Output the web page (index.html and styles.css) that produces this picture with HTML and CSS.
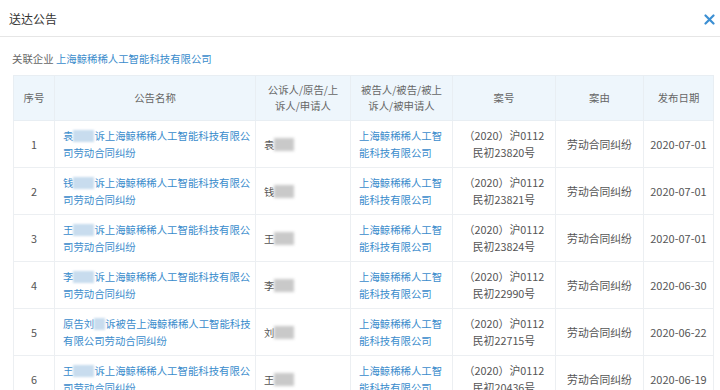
FILE: index.html
```html
<!DOCTYPE html>
<html lang="zh-CN">
<head>
<meta charset="utf-8">
<title>送达公告</title>
<link rel="stylesheet" href="styles.css">
</head>
<body>
<div class="dialog">
  <div class="dlg-head">
    <span class="dlg-title">送达公告</span>
    <svg class="close" width="11" height="11" viewBox="0 0 11 11"><path d="M1.5 1.5 L9.5 9.5 M9.5 1.5 L1.5 9.5" stroke="#3b8fd3" stroke-width="2.2" stroke-linecap="round"/></svg>
  </div>
  <div class="dlg-body">
    <div class="rel">关联企业 <a class="link">上海鲸稀稀人工智能科技有限公司</a></div>
    <table class="grid">
      <colgroup>
        <col class="c1"><col class="c2"><col class="c3"><col class="c4"><col class="c5"><col class="c6"><col class="c7">
      </colgroup>
      <thead>
        <tr>
          <th>序号</th>
          <th>公告名称</th>
          <th>公诉人/原告/上诉人/申请人</th>
          <th>被告人/被告/被上诉人/被申请人</th>
          <th>案号</th>
          <th>案由</th>
          <th>发布日期</th>
        </tr>
      </thead>
      <tbody>
        <tr>
          <td class="ctr">1</td>
          <td class="lft"><a class="link">袁<span class="blur b2"></span>诉上海鲸稀稀人工智能科技有限公司劳动合同纠纷</a></td>
          <td class="lft">袁<span class="gblur"></span></td>
          <td class="lft"><a class="link">上海鲸稀稀人工智能科技有限公司</a></td>
          <td class="ctr">（2020）沪0112民初23820号</td>
          <td class="ctr">劳动合同纠纷</td>
          <td class="ctr date">2020-07-01</td>
        </tr>
        <tr>
          <td class="ctr">2</td>
          <td class="lft"><a class="link">钱<span class="blur b2"></span>诉上海鲸稀稀人工智能科技有限公司劳动合同纠纷</a></td>
          <td class="lft">钱<span class="gblur"></span></td>
          <td class="lft"><a class="link">上海鲸稀稀人工智能科技有限公司</a></td>
          <td class="ctr">（2020）沪0112民初23821号</td>
          <td class="ctr">劳动合同纠纷</td>
          <td class="ctr date">2020-07-01</td>
        </tr>
        <tr>
          <td class="ctr">3</td>
          <td class="lft"><a class="link">王<span class="blur b2"></span>诉上海鲸稀稀人工智能科技有限公司劳动合同纠纷</a></td>
          <td class="lft">王<span class="gblur"></span></td>
          <td class="lft"><a class="link">上海鲸稀稀人工智能科技有限公司</a></td>
          <td class="ctr">（2020）沪0112民初23824号</td>
          <td class="ctr">劳动合同纠纷</td>
          <td class="ctr date">2020-07-01</td>
        </tr>
        <tr>
          <td class="ctr">4</td>
          <td class="lft"><a class="link">李<span class="blur b2"></span>诉上海鲸稀稀人工智能科技有限公司劳动合同纠纷</a></td>
          <td class="lft">李<span class="gblur"></span></td>
          <td class="lft"><a class="link">上海鲸稀稀人工智能科技有限公司</a></td>
          <td class="ctr">（2020）沪0112民初22990号</td>
          <td class="ctr">劳动合同纠纷</td>
          <td class="ctr date">2020-06-30</td>
        </tr>
        <tr>
          <td class="ctr">5</td>
          <td class="lft"><a class="link">原告刘<span class="blur b1"></span>诉被告上海鲸稀稀人工智能科技有限公司劳动合同纠纷</a></td>
          <td class="lft">刘<span class="gblur"></span></td>
          <td class="lft"><a class="link">上海鲸稀稀人工智能科技有限公司</a></td>
          <td class="ctr">（2020）沪0112民初22715号</td>
          <td class="ctr">劳动合同纠纷</td>
          <td class="ctr date">2020-06-22</td>
        </tr>
        <tr>
          <td class="ctr">6</td>
          <td class="lft"><a class="link">王<span class="blur b2"></span>诉上海鲸稀稀人工智能科技有限公司劳动合同纠纷</a></td>
          <td class="lft">王<span class="gblur"></span></td>
          <td class="lft"><a class="link">上海鲸稀稀人工智能科技有限公司</a></td>
          <td class="ctr">（2020）沪0112民初20436号</td>
          <td class="ctr">劳动合同纠纷</td>
          <td class="ctr date">2020-06-19</td>
        </tr>
      </tbody>
    </table>
  </div>
</div>
</body>
</html>
```
FILE: styles.css
```css
html, body {
  margin: 0;
  padding: 0;
  background: #fff;
}
body {
  font-family: "Noto Sans CJK SC", "Noto Sans", sans-serif;
  font-size: 10.4px;
  color: #555;
}
.dialog {
  width: 720px;
}
.dlg-head {
  height: 36px;
  display: flex;
  align-items: center;
  justify-content: space-between;
  padding: 0 5px 0 9px;
  border-bottom: 1px solid #e6e6e6;
}
.dlg-title {
  font-size: 12px;
  color: #333;
}
.close {
  display: block;
  margin-top: 2px;
}
.dlg-body {
  padding: 13px 7px 0 13px;
}
.rel {
  line-height: 17px;
  color: #666;
  margin-bottom: 8px;
  margin-left: -1px;
}
.link {
  color: #3a8ccc;
  text-decoration: none;
}
.grid {
  width: 700px;
  table-layout: fixed;
  border-collapse: collapse;
  border: 1px solid #e8eef3;
}
.c1 { width: 41px; }
.c2 { width: 201px; }
.c3 { width: 95px; }
.c4 { width: 102px; }
.c5 { width: 103px; }
.c6 { width: 88px; }
.c7 { width: 70px; }
.grid th {
  background: #eef6fc;
  color: #666;
  font-weight: normal;
  line-height: 16px;
  padding: 6px 9px 6px;
  border: 1px solid #e8eef3;
  text-align: center;
}
.grid td {
  line-height: 17px;
  padding: 6px 4px 6px 8px;
  border: 1px solid #eceff2;
  vertical-align: middle;
  color: #555;
}
.grid td.ctr {
  text-align: center;
  padding: 6px 6px;
  font-size: 10.8px;
}
.grid td.date {
  font-size: 11px;
  padding: 6px 2px;
}
.grid td.lft {
  text-align: left;
}
.blur {
  display: inline-block;
  height: 12px;
  vertical-align: -2px;
  background: #c8dcee;
  filter: blur(1.2px);
}
.b2 { width: 21px; }
.b1 { width: 11px; }
.gblur {
  display: inline-block;
  width: 20px;
  height: 13px;
  vertical-align: -2px;
  background: #c9c9c9;
  filter: blur(1.5px);
}
```
